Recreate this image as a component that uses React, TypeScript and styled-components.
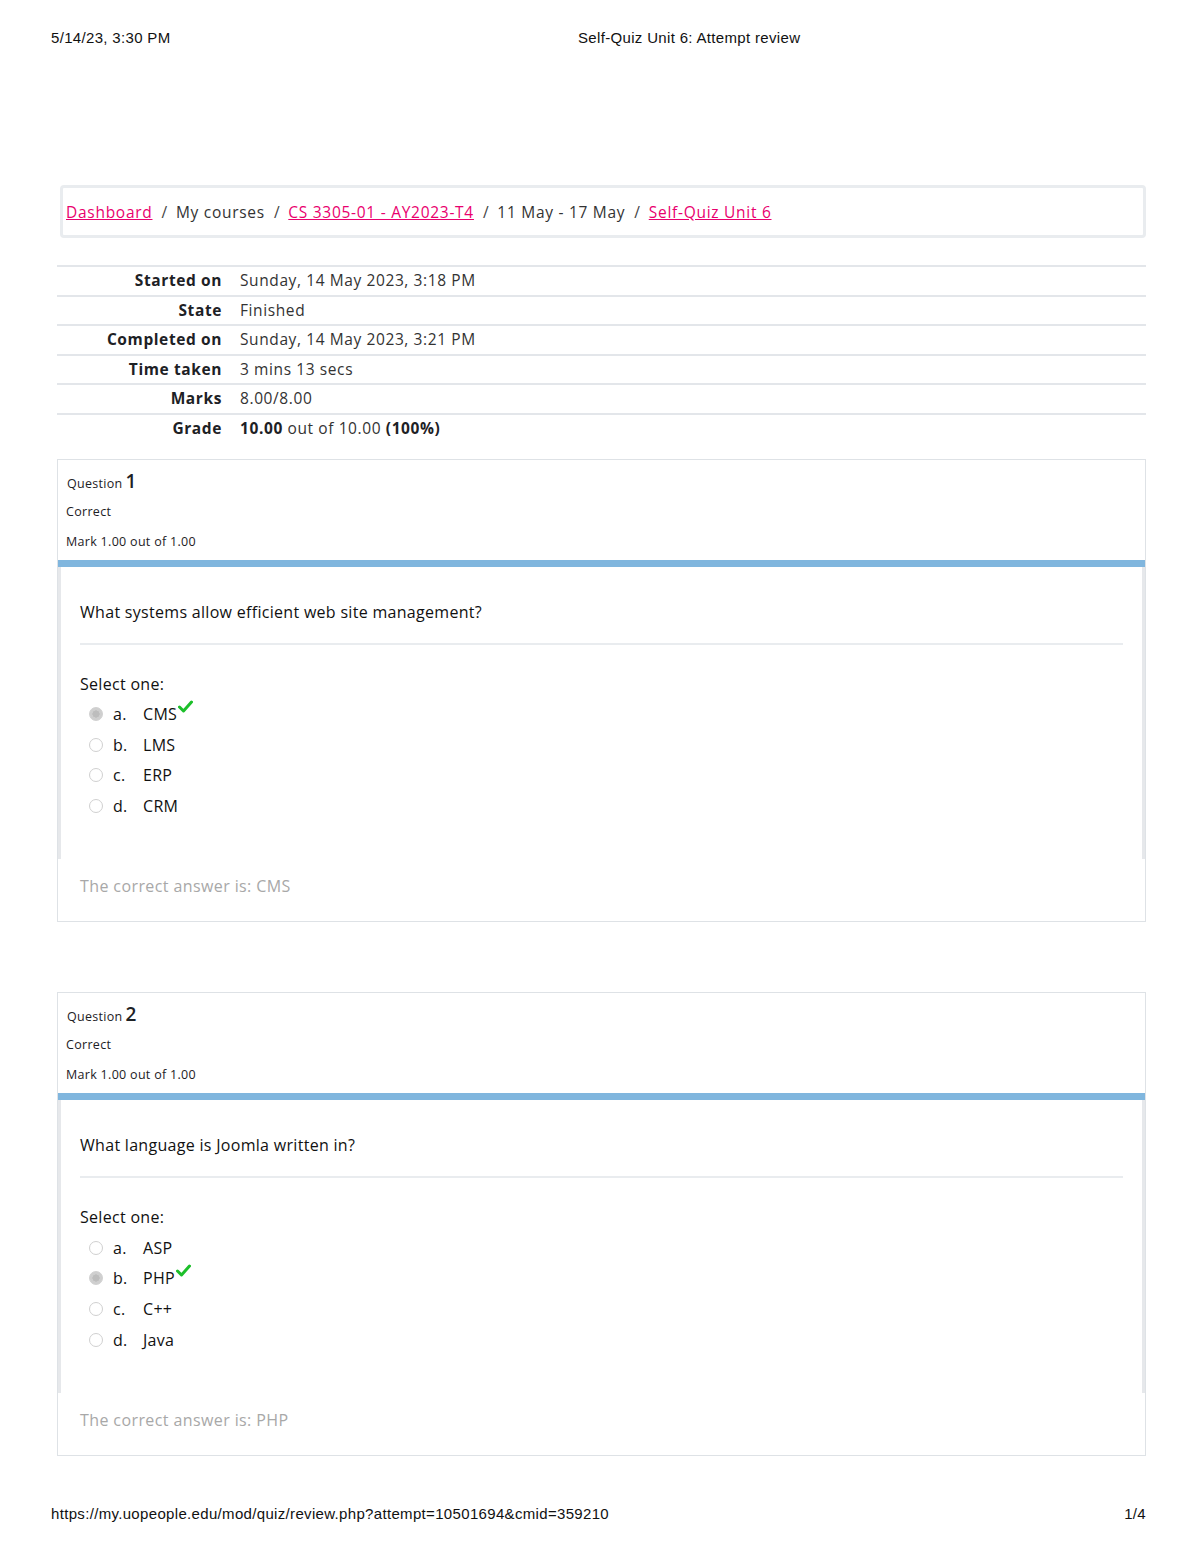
import React from "react";
import styled, { createGlobalStyle } from "styled-components";

const GlobalStyle = createGlobalStyle`
  html, body { margin: 0; padding: 0; background: #fff; }
  * { box-sizing: border-box; }
`;

const Page = styled.div`
  width: 1200px;
  min-height: 1553px;
  display: flex;
  flex-direction: column;
  font-family: "Open Sans", "Noto Sans", sans-serif;
  color: #1d2125;
`;

const PrintBar = styled.div`
  display: grid;
  grid-template-columns: 527px 1fr auto;
  padding: 0 54px 0 51px;
  font-family: "Liberation Sans", Arial, sans-serif;
  font-size: 15px;
  line-height: 18px;
  letter-spacing: 0.33px;
  color: #111;
`;

const PrintHeader = styled(PrintBar)`
  padding-top: 29px;
`;

const PrintFooter = styled(PrintBar)`
  margin-top: auto;
  padding-bottom: 30px;
  grid-template-columns: 1fr auto;
`;

const Main = styled.main`
  margin: 138px 54px 0 57px;
`;

const Breadcrumb = styled.nav`
  margin-left: 3px;
  height: 53px;
  border: 3px solid #e9ecef;
  border-radius: 4px;
  padding: 0 3px;
  display: flex;
  align-items: center;
  font-size: 15.5px;
  letter-spacing: 0.72px;
  color: #333;
`;

const Crumb = styled.a`
  color: #e9006e;
  text-decoration: underline;
`;

const Sep = styled.span`
  margin: 0 8px 0 9px;
  color: #444;
`;

const Summary = styled.div`
  margin-top: 27px;
  display: grid;
  grid-template-columns: 165px 1fr;
  column-gap: 18px;
  font-size: 15.5px;
  line-height: 27.6px;
  letter-spacing: 0.6px;
`;

const Label = styled.div`
  border-top: 2px solid #e3e6ea;
  text-align: right;
  font-weight: 700;
  color: #1d2125;
`;

const Value = styled.div`
  border-top: 2px solid #e3e6ea;
  margin-left: -18px;
  padding-left: 18px;
  color: #333;
`;

const Strong = styled.b`
  font-weight: 700;
  color: #1d2125;
`;

const Card = styled.section<{ $gap: number }>`
  margin-top: ${(p) => p.$gap}px;
  border: 1px solid #dee2e6;
`;

const Info = styled.div`
  padding: 9px 8px 8px 9px;
  letter-spacing: 0.3px;
`;

const QNo = styled.div`
  font-size: 12.5px;
  line-height: 24px;
  color: #1d2125;
  span {
    font-size: 19px;
    font-weight: 600;
    margin-left: 3px;
  }
`;

const InfoLine = styled.div<{ $mt: number }>`
  margin-top: ${(p) => p.$mt}px;
  font-size: 12.5px;
  line-height: 20px;
  margin-left: -1px;
  color: #1d2125;
`;

const Formulation = styled.div`
  border-top: 7px solid #80b6de;
  box-shadow: inset 3px 0 0 #e6e8eb, inset -3px 0 0 #e6e8eb;
  padding: 33px 22px 38px;
  letter-spacing: 0.3px;
`;

const QText = styled.div`
  font-size: 16px;
  line-height: 24px;
  padding-bottom: 19px;
  border-bottom: 2px solid #e9ecef;
  color: #111;
`;

const Prompt = styled.div`
  margin-top: 27px;
  font-size: 16px;
  line-height: 24px;
  color: #111;
  margin-bottom: 3px;
`;

const Option = styled.div`
  display: flex;
  align-items: center;
  height: 30.7px;
  padding-left: 9px;
  font-size: 16px;
  color: #111;
`;

const Radio = styled.span<{ $checked?: boolean }>`
  width: 14px;
  height: 14px;
  border-radius: 50%;
  border: 1px solid #d0d0d0;
  background: ${(p) =>
    p.$checked ? "radial-gradient(circle, #bdbdbd 0 40%, #cfcfcf 45% 100%)" : "#fff"};
  flex: none;
  margin-right: 10px;
`;

const Letter = styled.span`
  width: 30px;
  flex: none;
`;

const Answer = styled.span`
  display: inline-flex;
  align-items: flex-start;
`;

const Check = styled.svg`
  width: 15px;
  height: 13px;
  margin-left: 1px;
  margin-top: -3px;
`;

const Outcome = styled.div`
  padding: 15px 22px 23px;
  font-size: 16px;
  line-height: 24px;
  letter-spacing: 0.4px;
  color: #a8a8a8;
`;

type Q = {
  no: number;
  text: string;
  options: string[];
  correct: number;
  gap: number;
};

const questions: Q[] = [
  { no: 1, text: "What systems allow efficient web site management?", options: ["CMS", "LMS", "ERP", "CRM"], correct: 0, gap: 16 },
  { no: 2, text: "What language is Joomla written in?", options: ["ASP", "PHP", "C++", "Java"], correct: 1, gap: 70 },
];

const rows: [string, React.ReactNode][] = [
  ["Started on", "Sunday, 14 May 2023, 3:18 PM"],
  ["State", "Finished"],
  ["Completed on", "Sunday, 14 May 2023, 3:21 PM"],
  ["Time taken", "3 mins 13 secs"],
  ["Marks", "8.00/8.00"],
  ["Grade", <><Strong>10.00</Strong> out of 10.00 <Strong>(100%)</Strong></>],
];

export default function App() {
  return (
    <>
      <GlobalStyle />
      <Page>
        <PrintHeader>
          <span>5/14/23, 3:30 PM</span>
          <span>Self-Quiz Unit 6: Attempt review</span>
        </PrintHeader>
        <Main>
          <Breadcrumb>
            <Crumb>Dashboard</Crumb>
            <Sep>/</Sep>
            <span>My courses</span>
            <Sep>/</Sep>
            <Crumb>CS 3305-01 - AY2023-T4</Crumb>
            <Sep>/</Sep>
            <span>11 May - 17 May</span>
            <Sep>/</Sep>
            <Crumb>Self-Quiz Unit 6</Crumb>
          </Breadcrumb>
          <Summary>
            {rows.map(([l, v]) => (
              <React.Fragment key={l}>
                <Label>{l}</Label>
                <Value>{v}</Value>
              </React.Fragment>
            ))}
          </Summary>
          {questions.map((q) => (
            <Card key={q.no} $gap={q.gap}>
              <Info>
                <QNo>
                  Question<span>{q.no}</span>
                </QNo>
                <InfoLine $mt={6}>Correct</InfoLine>
                <InfoLine $mt={10}>Mark 1.00 out of 1.00</InfoLine>
              </Info>
              <Formulation>
                <QText>{q.text}</QText>
                <Prompt>Select one:</Prompt>
                {q.options.map((o, i) => (
                  <Option key={o}>
                    <Radio $checked={i === q.correct} />
                    <Letter>{"abcd"[i]}.</Letter>
                    <Answer>
                      {o}
                      {i === q.correct && (
                        <Check viewBox="0 0 15 13">
                          <path d="M1.5 7 L5.5 11 L13.5 2" fill="none" stroke="#1cbf2a" strokeWidth="3" strokeLinecap="round" strokeLinejoin="round" />
                        </Check>
                      )}
                    </Answer>
                  </Option>
                ))}
              </Formulation>
              <Outcome>The correct answer is: {q.options[q.correct]}</Outcome>
            </Card>
          ))}
        </Main>
        <PrintFooter>
          <span>https://my.uopeople.edu/mod/quiz/review.php?attempt=10501694&amp;cmid=359210</span>
          <span>1/4</span>
        </PrintFooter>
      </Page>
    </>
  );
}
